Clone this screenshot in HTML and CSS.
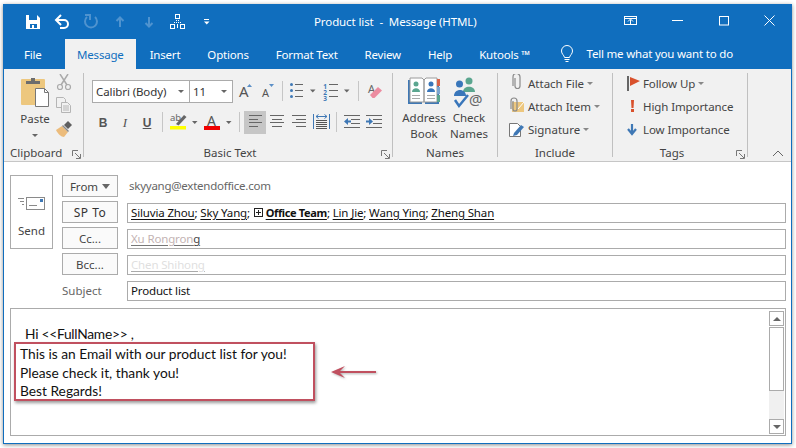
FILE: index.html
```html
<!DOCTYPE html>
<html lang="en">
<head>
  <meta charset="UTF-8" />
  <title>Product list - Message (HTML)</title>
  <link rel="stylesheet" href="styles.css">
</head>
<body>
  <div class="window">

    <div class="titlebar">
      <svg class="qat" width="210" height="34" viewBox="4 4 210 34">
        <!-- save -->
        <path d="M26 15h11l3 3v11H26z" fill="#fff"/>
        <rect x="29" y="15" width="8" height="5" fill="#106ebe"/>
        <rect x="30" y="24" width="7" height="4" fill="#106ebe"/>
        <rect x="32" y="25" width="2" height="3" fill="#fff"/>
        <!-- undo -->
        <path d="M57 20h7a4 4 0 0 1 0 8h-4" fill="none" stroke="#fff" stroke-width="2"/>
        <path d="M61 15l-5 5 5 5" fill="none" stroke="#fff" stroke-width="2"/>
        <!-- redo, dimmed -->
        <path d="M95 17a6 6 0 1 1-8 0" fill="none" stroke="#4f93cf" stroke-width="2"/>
        <path d="M85 15h5v5" fill="none" stroke="#4f93cf" stroke-width="2"/>
        <!-- up and down -->
        <path d="M120 27V18M116.500 21l3.500-3.500 3.500 3.500" fill="none" stroke="#4f93cf" stroke-width="2"/>
        <path d="M149 17v9M145.500 23l3.500 3.500 3.500-3.500" fill="none" stroke="#4f93cf" stroke-width="2"/>
        <!-- tree -->
        <g fill="#fff">
          <path d="M175 14h5v5h-5zM176 15v3h3v-3z" fill-rule="evenodd"/>
          <path d="M170 24h5v5h-5zM171 25v3h3v-3z" fill-rule="evenodd"/>
          <path d="M180 24h5v5h-5zM181 25v3h3v-3z" fill-rule="evenodd"/>
          <rect x="176" y="20" width="1" height="1"/>
          <rect x="178" y="20" width="1" height="1"/>
          <rect x="174" y="22" width="1" height="1"/>
          <rect x="176" y="22" width="1" height="1"/>
          <rect x="178" y="22" width="1" height="1"/>
          <rect x="180" y="22" width="1" height="1"/>
          <rect x="177" y="24" width="1" height="4"/>
        </g>
        <!-- customize -->
        <path d="M204 19.500h5" stroke="#fff"/>
        <path d="M204 21.500h5.500l-2.750 3z" fill="#fff"/>
      </svg>
      <div class="title">Product list&nbsp; -&nbsp; Message (HTML)</div>
      <svg class="controls" width="170" height="34" viewBox="621 4 170 34">
        <rect x="624.500" y="16.500" width="12" height="8" fill="none" stroke="#fff"/>
        <path d="M624 18.500h13M630.500 24v-4M628 21.500l2.500-2.500 2.500 2.500" fill="none" stroke="#fff"/>
        <path d="M672 20.500h11" stroke="#fff"/>
        <rect x="719.500" y="16.500" width="9" height="8.500" fill="none" stroke="#fff"/>
        <path d="M764.500 15.500l10 10M774.500 15.500l-10 10" stroke="#fff"/>
      </svg>
    </div>

    <div class="tabs">
      <span class="tab file">File</span>
      <span class="tab active">Message</span>
      <span class="tab">Insert</span>
      <span class="tab">Options</span>
      <span class="tab">Format Text</span>
      <span class="tab">Review</span>
      <span class="tab">Help</span>
      <span class="tab">Kutools ™</span>
      <svg class="bulb" width="14" height="18" viewBox="0 0 14 18">
        <path d="M4.500 12.500C4 10 1.500 9 1.500 6a5.500 5.500 0 0 1 11 0c0 3-2.500 4-3 6.500z" fill="none" stroke="#fff"/>
        <path d="M4.500 14.500h5M5.500 16.500h3" stroke="#fff"/>
      </svg>
      <span class="tell">Tell me what you want to do</span>
    </div>

    <div class="ribbon">
      <section class="group clipboard">
        <div class="group-body paste-body">
          <div class="paste">
            <svg width="30" height="32" viewBox="20 76 30 32">
              <rect x="21" y="79" width="24" height="26" rx="1" fill="#edc77e"/>
              <path d="M26 84v-3h5v-3h4v3h5v3z" fill="#6d6d6d"/>
              <path d="M35.500 88.500h9l4 4v14h-13z" fill="#fff" stroke="#777"/>
              <path d="M44.500 88.500v4h4" fill="none" stroke="#777"/>
            </svg>
            <span class="paste-label">Paste</span>
            <i class="caret"></i>
          </div>
          <div class="clip-tools">
            <svg width="16" height="17" viewBox="57 74 16 17">
              <path d="M61 74l7 11M69 74l-7 11" stroke="#aaa" stroke-width="1.500"/>
              <circle cx="61" cy="87" r="2.500" fill="none" stroke="#aaa" stroke-width="1.200"/>
              <circle cx="69" cy="87" r="2.500" fill="none" stroke="#aaa" stroke-width="1.200"/>
            </svg>
            <svg width="16" height="16" viewBox="57 97 16 16">
              <path d="M57.500 97.500h7l2 2v8h-9z" fill="#f1f1f1" stroke="#b5b5b5"/>
              <path d="M62.500 102.500h6l3 3v7h-9z" fill="#f1f1f1" stroke="#b5b5b5"/>
              <path d="M64 106h6M64 108h6M64 110h6" stroke="#b5b5b5"/>
            </svg>
            <svg width="17" height="17" viewBox="57 121 17 17">
              <path d="M57 130l6-4 6 6-4 5c-3 0-6-3-8-7z" fill="#ecbc7c"/>
              <path d="M63 126l6 6 1-1-6-6z" fill="#8a8a8a"/>
              <path d="M65 125l4-4 4 4-4 4z" fill="#5f5f5f"/>
            </svg>
          </div>
        </div>
        <div class="group-label">Clipboard<svg class="launcher" width="9" height="9" viewBox="0 0 9 9"><path d="M.5 6V.5H6M3 3l5 5M8.500 4v4.500H4" fill="none" stroke="#777"/></svg></div>
      </section>

      <section class="group basic-text">
        <div class="group-body text-rows">
          <div class="tool-row">
            <div class="combo font-name">Calibri (Body)<i class="caret"></i></div>
            <div class="combo font-size">11<i class="caret"></i></div>
            <svg width="152" height="23" viewBox="233 80 152 23">
              <text x="239" y="97" font-size="15" fill="#555" class="glyph">A</text>
              <path d="M247 87l2.500-3 2.500 3z" fill="#5b8fc7"/>
              <text x="262" y="97" font-size="11" fill="#555" class="glyph">A</text>
              <path d="M269 84h5l-2.500 3z" fill="#5b8fc7"/>
              <path d="M282.500 81v20M358.500 81v20" stroke="#c6c6c6"/>
              <!-- bullets -->
              <circle cx="291.500" cy="84.500" r="1.500" fill="#3f78b5"/>
              <circle cx="291.500" cy="90.500" r="1.500" fill="#3f78b5"/>
              <circle cx="291.500" cy="96.500" r="1.500" fill="#3f78b5"/>
              <path d="M295 84.500h8M295 90.500h8M295 96.500h8" stroke="#666"/>
              <path d="M310 89.500h5.500l-2.750 3z" fill="#666"/>
              <!-- numbering -->
              <text x="325" y="81.500" class="digit">123</text>
              <path d="M329 84.500h9M329 90.500h9M329 96.500h9" stroke="#666"/>
              <path d="M344 89.500h5.500l-2.750 3z" fill="#666"/>
              <!-- clear formatting -->
              <text x="368" y="93" font-size="11" fill="#666" class="glyph">A</text>
              <path d="M370 95l8-8 4 3.500-7.500 7.500h-2z" fill="#ec8ca0"/>
            </svg>
          </div>
          <div class="tool-row second">
            <span class="fmt bold">B</span>
            <span class="fmt italic">I</span>
            <span class="fmt under">U</span>
            <svg class="row-strip" width="223" height="23" viewBox="162 111 223 23">
              <path d="M162.500 112v20M239.500 112v20M336.500 112v20" stroke="#c6c6c6"/>
              <!-- highlight -->
              <text x="170" y="121" font-size="9.500" fill="#666" class="glyph">ab</text>
              <path d="M176 124l8-9 2.500 2-8 8.500z" fill="#666"/>
              <rect x="170" y="126" width="16" height="3.500" fill="#ffff00"/>
              <path d="M192 121h5.500l-2.750 3z" fill="#666"/>
              <!-- font colour -->
              <text x="207" y="125.500" font-size="14" fill="#555" class="glyph">A</text>
              <rect x="204" y="126" width="16" height="4" fill="#f00000"/>
              <path d="M226 121h5.500l-2.750 3z" fill="#666"/>
              <!-- alignment -->
              <rect x="244" y="111" width="22" height="23" fill="#c6c6c6"/>
              <path d="M249 115.500h13M249 119.500h9M249 122.500h13M249 126.500h9" stroke="#666"/>
              <path d="M270 115.500h14M272 119.500h10M270 122.500h14M272 126.500h10" stroke="#666"/>
              <path d="M292 115.500h14M296 119.500h10M292 122.500h14M296 126.500h10" stroke="#666"/>
              <path d="M313.500 114v15M329.500 114v15" stroke="#3f78b5"/>
              <path d="M316 116.500h11M318.500 114.500l-2.500 2 2.500 2M324.500 114.500l2.500 2-2.500 2" fill="none" stroke="#3f78b5"/>
              <path d="M316 120.500h11M316 122.500h11M316 124.500h11M316 126.500h11M316 128.500h11" stroke="#555"/>
              <!-- indent -->
              <path d="M344 115.500h16M351 119.500h9M351 123.500h9M344 127.500h16" stroke="#666"/>
              <path d="M344 121.500l4-3.500v2.500h3v2h-3v2.500z" fill="#3f78b5"/>
              <path d="M366 115.500h16M373 119.500h9M373 123.500h9M366 127.500h16" stroke="#666"/>
              <path d="M373 121.500l-4-3.500v2.500h-3v2h3v2.500z" fill="#3f78b5"/>
            </svg>
          </div>
        </div>
        <div class="group-label">Basic Text<svg class="launcher" width="9" height="9" viewBox="0 0 9 9"><path d="M.5 6V.5H6M3 3l5 5M8.500 4v4.500H4" fill="none" stroke="#777"/></svg></div>
      </section>

      <section class="group names">
        <div class="group-body names-body">
          <div class="big-tool address">
            <svg width="34" height="30" viewBox="407 76 34 30">
              <path d="M408 80h14v24h-14zM425 80h14v24h-14z" fill="#3f78b5"/>
              <path d="M410 78h12l2 2v22h-14zM424 80l2-2h11v24h-13z" fill="#fff" stroke="#9a9a9a"/>
              <rect x="437" y="79" width="3" height="7" fill="#d9634a"/>
              <rect x="437" y="87" width="3" height="7" fill="#7da6cf"/>
              <rect x="437" y="95" width="3" height="7" fill="#5ba68f"/>
              <circle cx="416" cy="84" r="2.500" fill="#5ba68f"/>
              <path d="M412 92c0-5 8-5 8 0z" fill="#5ba68f"/>
              <circle cx="431" cy="84" r="2.500" fill="#3976ba"/>
              <path d="M427 92c0-5 8-5 8 0z" fill="#3976ba"/>
              <path d="M412 95.500h8M412 98.500h8M427 95.500h8M427 98.500h8" stroke="#aaa"/>
            </svg>
            <span>Address<br>Book</span>
          </div>
          <div class="big-tool check">
            <svg width="32" height="33" viewBox="454 76 32 33">
              <circle cx="470" cy="81" r="3.500" fill="#5ba68f"/>
              <path d="M464 92c0-7 12-7 12 0z" fill="#5ba68f"/>
              <circle cx="460.500" cy="84" r="3.500" fill="#3976ba"/>
              <path d="M455 96c0-8 12-8 12 0z" fill="#3976ba"/>
              <path d="M456 100l4 6 9-11" fill="none" stroke="#3976ba" stroke-width="2.500"/>
              <text x="470" y="105" class="at">@</text>
            </svg>
            <span>Check<br>Names</span>
          </div>
        </div>
        <div class="group-label">Names</div>
      </section>

      <section class="group include">
        <div class="group-body list-tools">
          <div class="list-tool">
            <svg width="16" height="18" viewBox="509 74 16 18">
              <path d="M515 78v8a2.500 2.500 0 0 0 5 0v-9a3.500 3.500 0 0 0-7 0v9" fill="none" stroke="#8a8a8a" stroke-width="1.200"/>
            </svg>
            <span>Attach File</span><i class="caret"></i>
          </div>
          <div class="list-tool">
            <svg width="16" height="18" viewBox="509 96 16 18">
              <path d="M512 101h12v10h-12z" fill="#edc77e"/>
              <path d="M518 108l6-7" stroke="#fff"/>
              <path d="M513 100v8a2 2 0 0 0 4 0v-8a3 3 0 0 0-6 0v8" fill="none" stroke="#8a8a8a" stroke-width="1.200"/>
            </svg>
            <span>Attach Item</span><i class="caret"></i>
          </div>
          <div class="list-tool">
            <svg width="16" height="18" viewBox="509 120 16 18">
              <path d="M509.500 123.500h8l3 3v10h-11z" fill="#fff" stroke="#777"/>
              <path d="M514 133l7-8 3 2-7 8-4 1z" fill="#3f78b5"/>
            </svg>
            <span>Signature</span><i class="caret"></i>
          </div>
        </div>
        <div class="group-label">Include</div>
      </section>

      <section class="group tags">
        <div class="group-body list-tools">
          <div class="list-tool">
            <svg width="16" height="18" viewBox="626 74 16 18">
              <path d="M628 76v15" stroke="#666" stroke-width="2"/>
              <path d="M630 77l10 4-10 5z" fill="#d9512c"/>
            </svg>
            <span>Follow Up</span><i class="caret"></i>
          </div>
          <div class="list-tool">
            <svg width="16" height="18" viewBox="626 97 16 18">
              <path d="M631 100h3l-.5 8h-2z" fill="#d9512c"/>
              <rect x="631" y="109" width="3" height="3" fill="#d9512c"/>
            </svg>
            <span>High Importance</span>
          </div>
          <div class="list-tool">
            <svg width="16" height="18" viewBox="626 121 16 18">
              <path d="M632 125v9M628 130l4 5 4-5" fill="none" stroke="#3f78b5" stroke-width="2.200"/>
            </svg>
            <span>Low Importance</span>
          </div>
        </div>
        <div class="group-label">Tags<svg class="launcher" width="9" height="9" viewBox="0 0 9 9"><path d="M.5 6V.5H6M3 3l5 5M8.500 4v4.500H4" fill="none" stroke="#777"/></svg></div>
      </section>

      <div class="collapse">
        <svg width="12" height="7" viewBox="0 0 12 7"><path d="M1 6l5-5 5 5" fill="none" stroke="#666"/></svg>
      </div>
    </div>

    <div class="compose">
      <div class="header">
        <div class="send-btn">
          <svg width="28" height="14" viewBox="17 197 28 14">
            <path d="M17 198.500h6M19 201.500h4M21 204.500h2" stroke="#8a8a8a"/>
            <rect x="25.500" y="197.500" width="18" height="12" fill="#fff" stroke="#8a8a8a"/>
            <rect x="39" y="199" width="3" height="3" fill="#3f78b5"/>
            <path d="M28 205.500h8" stroke="#8a8a8a"/>
          </svg>
          <span>Send</span>
        </div>
        <div class="addr-btn">From<i class="from-caret"></i></div>
        <div class="from-value">skyyang@extendoffice.com</div>
        <div class="addr-btn to-btn">SP To</div>
        <div class="field">
          <u>Siluvia Zhou</u>;&nbsp;<u>Sky Yang</u>;&nbsp; <i class="plus"></i><u class="team">Office Team</u>;&nbsp;<u>Lin Jie</u>;&nbsp;<u>Wang Ying</u>;&nbsp;<u>Zheng Shan</u>
        </div>
        <div class="addr-btn">Cc...</div>
        <div class="field"><u class="faded">Xu Rongron<span class="dark">g</span></u></div>
        <div class="addr-btn">Bcc...</div>
        <div class="field"><u class="fainter">Chen Shihong</u></div>
        <div class="subject-label">Subject</div>
        <div class="field">Product list</div>
      </div>

      <div class="message">
        <div class="message-text">
          <p class="greeting">Hi &lt;&lt;FullName&gt;&gt; ,</p>
          <div class="note-row">
            <div class="note">
              <p>This is an Email with our product list for you!</p>
              <p>Please check it, thank you!</p>
              <p>Best Regards!</p>
            </div>
            <svg class="note-arrow" width="48" height="16" viewBox="0 0 48 16">
              <path d="M1 8l14-6-5 5h36v2H10l5 5z" fill="#c0505f"/>
            </svg>
          </div>
        </div>
        <div class="scrollbar">
          <div class="scroll-btn"><i class="arrow-up"></i></div>
          <div class="scroll-thumb"></div>
          <div class="scroll-track"></div>
          <div class="scroll-btn"><i class="arrow-down"></i></div>
        </div>
      </div>
    </div>

  </div>
</body>
</html>
```

FILE: styles.css
```css
body {
  margin: 0;
  height: 448px;
  padding: 4px 4px 5px 3px;
  box-sizing: border-box;
  background: #fff;
  font-family: "Noto Sans", sans-serif;
  font-size: 11.5px;
  color: #444;
  overflow: hidden;
}

svg {
  display: block;
  flex: none;
}

.window {
  height: 100%;
  display: flex;
  flex-direction: column;
  border: 1px solid #106ebe;
  border-top: 0;
  box-shadow: 0 1px 4px rgba(0, 0, 0, 0.45);
  background: #fff;
}

.titlebar {
  height: 34px;
  background: #106ebe;
  display: flex;
  align-items: center;
  color: #fff;
}

.title {
  margin-left: 100px;
  font-size: 11.5px;
  letter-spacing: -0.1px;
  white-space: nowrap;
  flex: 1;
}

.tabs {
  height: 31px;
  background: #106ebe;
  display: flex;
  align-items: stretch;
  color: #fff;
  font-size: 11.5px;
  letter-spacing: -0.2px;
}

.tab {
  display: flex;
  align-items: center;
  padding: 0 13.5px;
  margin-top: 1px;
  white-space: nowrap;
}

.tab.file {
  margin-left: 6.500px;
  margin-right: 23px;
  padding-right: 0;
}

.tab.active {
  padding: 0 12.5px;
  background: #f1f1f1;
  color: #106ebe;
}

.bulb {
  align-self: center;
  margin: 0 13px 0 16px;
}

.tell {
  align-self: center;
  white-space: nowrap;
}

.ribbon {
  height: 93px;
  box-sizing: border-box;
  background: #f1f1f1;
  border-bottom: 1px solid #c6c6c6;
  display: flex;
  padding-top: 4px;
}

.group {
  box-sizing: border-box;
  height: 84px;
  border-right: 1px solid #c0c0c0;
  display: flex;
  flex-direction: column;
}

.group-body {
  flex: 1;
  min-height: 0;
}

.group-label {
  height: 16px;
  margin-bottom: -4px;
  line-height: 16px;
  text-align: center;
  position: relative;
  white-space: nowrap;
}

.launcher {
  position: absolute;
  right: 2px;
  top: 5px;
}

.basic-text .group-label,
.tags .group-label {
  padding-right: 16px;
}

.caret {
  display: inline-block;
  width: 0;
  height: 0;
  border: 3px solid transparent;
  border-top-color: #666;
  border-bottom: 0;
}

.clipboard { width: 80px; }
.basic-text { width: 309px; }
.names { width: 105px; }
.include { width: 115px; }
.tags { width: 135px; }

.clipboard .group-label {
  text-align: left;
  padding-left: 6px;
}

.paste-body {
  display: flex;
  padding-left: 16px;
}

.paste {
  width: 30px;
  display: flex;
  flex-direction: column;
  align-items: center;
  padding-top: 3px;
}

.paste-label {
  margin-top: 2px;
  line-height: 18px;
}

.paste .caret {
  margin-top: 6px;
}

.clip-tools {
  margin-left: 6px;
  padding-top: 1px;
  display: flex;
  flex-direction: column;
  gap: 6px;
}

.clip-tools svg:last-child {
  margin-top: 2px;
}

.text-rows {
  padding: 7px 0 0 8px;
}

.tool-row {
  display: flex;
  align-items: center;
  height: 23px;
}

.tool-row.second {
  margin-top: 8px;
}

.row-strip {
  margin-left: 4px;
}

.combo {
  box-sizing: border-box;
  height: 23px;
  border: 1px solid #ababab;
  background: #fff;
  display: flex;
  align-items: center;
  justify-content: space-between;
  padding: 0 5px 0 3px;
  font-size: 11.5px;
  letter-spacing: -0.1px;
  color: #333;
  white-space: nowrap;
}

.font-name { width: 98px; }
.font-size { width: 44px; margin-left: -1px; }

.glyph {
  font-family: "Noto Sans", sans-serif;
}

.digit {
  font-family: "Noto Sans", sans-serif;
  font-size: 6.500px;
  font-weight: 700;
  fill: #3f78b5;
  writing-mode: vertical-rl;
  text-orientation: upright;
  letter-spacing: -2.800px;
}

.at {
  font-family: "Noto Sans", sans-serif;
  font-size: 15px;
  fill: #666;
}

.fmt {
  width: 22px;
  text-align: center;
  font-family: "Liberation Sans", sans-serif;
  font-size: 12px;
  color: #555;
}

.fmt.bold {
  font-weight: 700;
}

.fmt.italic {
  font-family: "Liberation Serif", serif;
  font-style: italic;
  font-size: 13px;
}

.fmt.under {
  font-weight: 700;
  text-decoration: underline;
}

.names-body {
  display: flex;
  padding-top: 3px;
}

.big-tool {
  display: flex;
  flex-direction: column;
  align-items: center;
  text-align: center;
  line-height: 16px;
  width: 50px;
}

.big-tool span {
  display: block;
}

.address {
  margin-left: 6px;
}

.address svg {
  margin-bottom: 4px;
}

.check {
  margin-left: -5px;
}

.check svg {
  margin-bottom: 1px;
}

.list-tools {
  padding: 1px 0 0 11px;
  display: flex;
  flex-direction: column;
  gap: 5px;
}

.tags .list-tools {
  padding-left: 13px;
}

.list-tool {
  height: 18px;
  display: flex;
  align-items: center;
  white-space: nowrap;
}

.list-tool svg {
  margin-right: 3px;
}

.tags .list-tool {
  letter-spacing: -0.1px;
}

.tags .list-tool svg {
  margin-right: 1px;
}

.list-tool .caret {
  margin-left: 3px;
  border-top-color: #888;
}

.collapse {
  flex: 1;
  display: flex;
  justify-content: flex-end;
  align-items: flex-end;
  padding: 0 7px 4px 0;
}

.compose {
  flex: 1;
  min-height: 0;
  display: flex;
  flex-direction: column;
  padding: 13px 5px 7px 6px;
  gap: 7px;
}

.header {
  display: grid;
  grid-template-columns: 43px 56px 1fr;
  grid-auto-rows: 22px;
  column-gap: 9px;
  row-gap: 4px;
}

.send-btn {
  grid-column: 1;
  grid-row: span 3;
  box-sizing: border-box;
  border: 1px solid #ababab;
  display: flex;
  flex-direction: column;
  align-items: center;
  padding-top: 21px;
  gap: 12px;
}

.addr-btn {
  grid-column: 2;
  box-sizing: border-box;
  border: 1px solid #ababab;
  display: flex;
  align-items: center;
  justify-content: center;
  background: #fafafa;
  gap: 4px;
}

.to-btn {
  font-size: 12px;
  letter-spacing: 0.5px;
  color: #333;
}

.from-caret {
  width: 0;
  height: 0;
  border: 4px solid transparent;
  border-top: 5px solid #666;
  border-bottom: 0;
}

.from-value {
  grid-column: 3;
  line-height: 22px;
  padding-left: 2px;
  letter-spacing: -0.25px;
  color: #666;
}

.field {
  grid-column: 3;
  box-sizing: border-box;
  align-self: end;
  height: 20px;
  border: 1px solid #ababab;
  padding-left: 3px;
  line-height: 18px;
  letter-spacing: -0.15px;
  color: #111;
  white-space: nowrap;
}

.field u {
  text-underline-offset: 2px;
}

.team {
  font-size: 11px;
  font-weight: 700;
  letter-spacing: -0.35px;
}

.plus {
  display: inline-block;
  box-sizing: border-box;
  width: 9px;
  height: 9px;
  margin: 0 3px 0 -2px;
  border: 1px solid #222;
  background:
    linear-gradient(#222, #222) center / 5px 1px no-repeat,
    linear-gradient(#222, #222) center / 1px 5px no-repeat;
}

.faded {
  color: #c3b3b3;
  text-decoration-color: #777;
}

.dark {
  color: #444;
}

.fainter {
  color: #dfdfdf;
  text-decoration-color: #aaa;
}

.subject-label {
  grid-column: 1 / 3;
  justify-self: end;
  width: 56px;
  align-self: end;
  line-height: 20px;
  color: #666;
}

.message {
  flex: 1;
  min-height: 0;
  border: 1px solid #ababab;
  display: flex;
}

.message-text {
  flex: 1;
  padding: 16px 0 0 3px;
  font-family: "Lato", sans-serif;
  font-size: 13.75px;
  line-height: 18.700px;
  color: #111;
}

.message-text p {
  margin: 0;
}

.greeting {
  padding-left: 11px;
  height: 17px;
  letter-spacing: -0.25px;
}

.note-row {
  display: flex;
  align-items: center;
}

.note {
  width: 301px;
  height: 59px;
  box-sizing: border-box;
  border: 2px solid #c0505f;
  box-shadow: 1px 2px 3px rgba(0, 0, 0, 0.4);
  padding: 1px 0 0 4px;
  white-space: nowrap;
}

.note-arrow {
  margin-left: 15px;
  filter: drop-shadow(1px 1px 1px rgba(0, 0, 0, 0.3));
}

.scrollbar {
  width: 15px;
  margin: 2px 1px 1px 0;
  display: flex;
  flex-direction: column;
}

.scroll-btn {
  box-sizing: border-box;
  height: 15px;
  border: 1px solid #ababab;
  background: #fff;
  display: flex;
  align-items: center;
  justify-content: center;
}

.arrow-up,
.arrow-down {
  width: 0;
  height: 0;
  border: 4px solid transparent;
}

.arrow-up {
  border-bottom-color: #666;
  border-top: 0;
}

.arrow-down {
  border-top-color: #666;
  border-bottom: 0;
}

.scroll-thumb {
  box-sizing: border-box;
  height: 64px;
  border: 1px solid #ababab;
  margin-top: 1px;
  background: #fff;
}

.scroll-track {
  flex: 1;
  background: #f0f0f0;
}
```
